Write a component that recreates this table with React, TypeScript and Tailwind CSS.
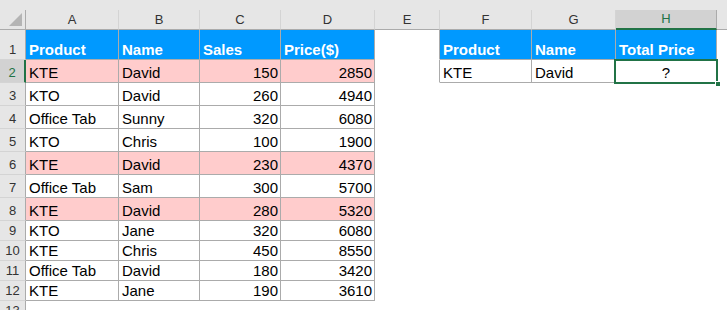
import React from "react";

const W = { rh: 26, A: 93, B: 81, C: 81, D: 94, E: 65, F: 92, G: 84, H: 101 };

type Row = { p: string; n: string; s: number; pr: number; pink?: boolean };
const data: Row[] = [
  { p: "KTE", n: "David", s: 150, pr: 2850, pink: true },
  { p: "KTO", n: "David", s: 260, pr: 4940 },
  { p: "Office Tab", n: "Sunny", s: 320, pr: 6080 },
  { p: "KTO", n: "Chris", s: 100, pr: 1900 },
  { p: "KTE", n: "David", s: 230, pr: 4370, pink: true },
  { p: "Office Tab", n: "Sam", s: 300, pr: 5700 },
  { p: "KTE", n: "David", s: 280, pr: 5320, pink: true },
  { p: "KTO", n: "Jane", s: 320, pr: 6080 },
  { p: "KTE", n: "Chris", s: 450, pr: 8550 },
  { p: "Office Tab", n: "David", s: 180, pr: 3420 },
  { p: "KTE", n: "Jane", s: 190, pr: 3610 },
];

const heights = [23, 23, 23, 23, 23, 23, 23, 20, 20, 20, 20];

const font = { fontFamily: '"Liberation Sans", Arial, sans-serif' };

function RowHead({ n, h, sel }: { n: number; h: number; sel?: boolean }) {
  return (
    <div
      className={
        "shrink-0 flex items-end justify-center text-[13px] leading-[16px] pb-[1px] border-b border-b-[#d4d4d4] " +
        (sel
          ? "bg-[#d2d2d2] text-[#217346] border-r-2 border-r-[#217346]"
          : "bg-[#e6e6e6] text-[#333] border-r border-r-[#ababab]")
      }
      style={{ width: W.rh, height: h }}
    >
      {n}
    </div>
  );
}

function Cell({
  w,
  children,
  cls = "",
}: {
  w: number;
  children?: React.ReactNode;
  cls?: string;
}) {
  return (
    <div
      className={"shrink-0 flex items-end text-[15px] leading-[17px] pb-[1px] overflow-hidden whitespace-nowrap " + cls}
      style={{ width: w }}
    >
      {children}
    </div>
  );
}

const bd = "border-r border-b border-[#ababab]";
const nb = "border-r border-b border-transparent";

export default function App() {
  return (
    <div className="w-[727px] h-[310px] overflow-hidden bg-white text-black" style={font}>
      {/* top strip */}
      <div className="h-[10px] bg-[#e6e6e6]" />
      {/* column header */}
      <div className="flex h-[20px] bg-[#e6e6e6] text-[13px] text-[#333]">
        <div
          className="shrink-0 relative border-r border-b border-[#ababab]"
          style={{ width: W.rh }}
        >
          <svg className="absolute right-[3px] bottom-[3px]" width="13" height="13" viewBox="0 0 13 13">
            <polygon points="13,0 13,13 0,13" fill="#b4b4b4" />
          </svg>
        </div>
        {(["A", "B", "C", "D", "E", "F", "G"] as const).map((c) => (
          <div
            key={c}
            className="shrink-0 flex items-center justify-center border-r border-r-[#d4d4d4] border-b border-b-[#ababab]"
            style={{ width: W[c] }}
          >
            {c}
          </div>
        ))}
        <div
          className="shrink-0 flex items-center justify-center bg-[#d2d2d2] text-[#217346] border-r border-r-[#ababab] border-b-2 border-b-[#217346]"
          style={{ width: W.H }}
        >
          H
        </div>
        <div className="flex-1 border-b border-[#ababab]" />
      </div>

      {/* row 1 */}
      <div className="flex h-[30px]">
        <RowHead n={1} h={30} />
        {[
          ["Product", W.A, bd],
          ["Name", W.B, bd],
          ["Sales", W.C, bd],
          ["Price($)", W.D, bd],
        ].map(([t, w, b]) => (
          <Cell key={t as string} w={w as number} cls={`${b} bg-[#0099ff] text-white font-bold pl-[3px]`}>
            {t}
          </Cell>
        ))}
        <Cell w={W.E} cls="border-r border-[#ababab] border-b border-b-transparent" />
        <Cell w={W.F} cls={`${bd} bg-[#0099ff] text-white font-bold pl-[3px]`}>Product</Cell>
        <Cell w={W.G} cls={`${bd} bg-[#0099ff] text-white font-bold pl-[3px]`}>Name</Cell>
        <Cell w={W.H} cls={`${bd} bg-[#0099ff] text-white font-bold pl-[3px]`}>Total Price</Cell>
        <div className="flex-1" />
      </div>

      {data.map((r, i) => {
        const h = heights[i];
        const bg = r.pink ? "bg-[#ffcccc]" : "bg-white";
        const rowNum = i + 2;
        return (
          <div key={i} className="flex" style={{ height: h }}>
            <RowHead n={rowNum} h={h} sel={rowNum === 2} />
            <Cell w={W.A} cls={`${bd} ${bg} pl-[3px]`}>
              {r.p}
            </Cell>
            <Cell w={W.B} cls={`${bd} ${bg} pl-[3px]`}>{r.n}</Cell>
            <Cell w={W.C} cls={`${bd} ${bg} justify-end pr-[2px]`}>{r.s}</Cell>
            <Cell w={W.D} cls={`${bd} ${bg} justify-end pr-[2px]`}>{r.pr}</Cell>
            {rowNum === 2 ? (
              <>
                <Cell w={W.E} cls="border-r border-[#ababab] border-b border-b-transparent" />
                <Cell w={W.F} cls={`${bd} pl-[3px]`}>KTE</Cell>
                <Cell w={W.G} cls={`${bd} pl-[3px]`}>David</Cell>
                <div className="shrink-0 relative" style={{ width: W.H, height: h }}>
                  <div className="h-full flex items-end justify-center text-[15px] leading-[17px] pb-[1px] border-r border-b border-[#ababab]">
                    ?
                  </div>
                  <div className="absolute -left-[2px] -top-[1px] right-[-1px] bottom-[-1px] border-2 border-[#217346]" />
                  <div className="absolute right-[-4px] bottom-[-4px] w-[6px] h-[6px] bg-[#217346] border border-white" />
                </div>
              </>
            ) : (
              <>
                <Cell w={W.E} cls={nb} />
                <Cell w={W.F} cls={nb} />
                <Cell w={W.G} cls={nb} />
                <Cell w={W.H} cls={nb} />
              </>
            )}
            <div className="flex-1" />
          </div>
        );
      })}

      {/* row 13 */}
      <div className="flex h-[20px]">
        <RowHead n={13} h={20} />
        <div className="flex-1" />
      </div>
    </div>
  );
}
